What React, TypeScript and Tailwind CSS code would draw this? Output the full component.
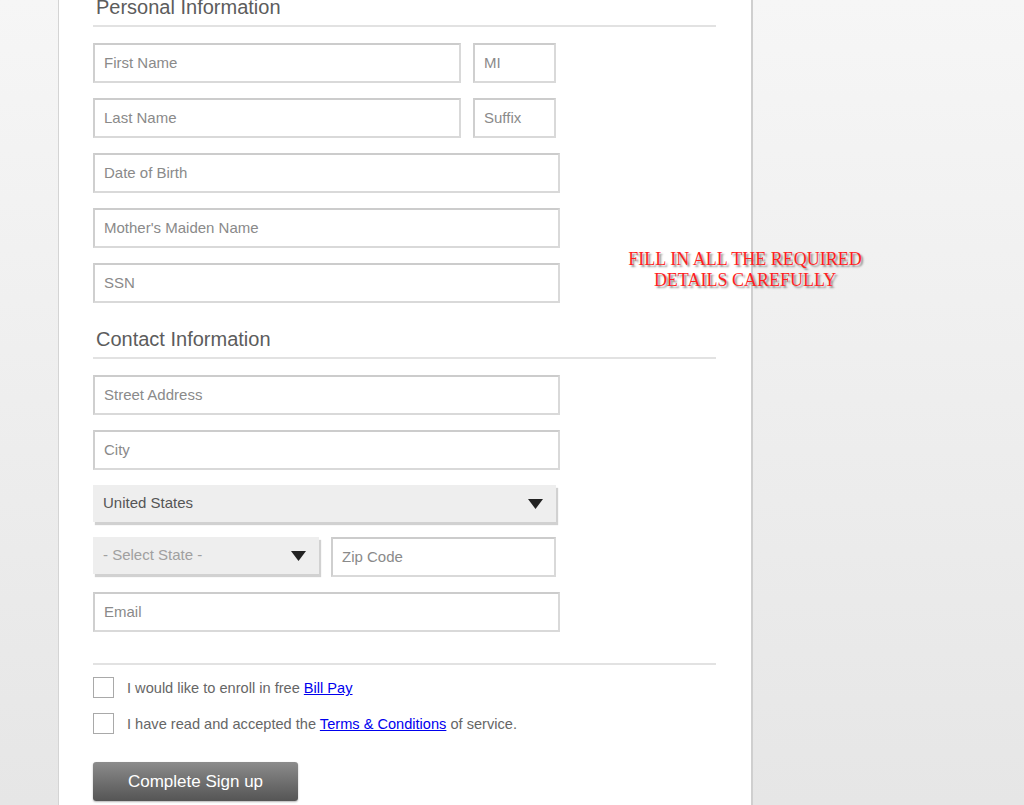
const font = { fontFamily: '"Liberation Sans", Arial, sans-serif' };

function Field({ placeholder, className = "" }: { placeholder: string; className?: string }) {
  return (
    <div
      className={`flex h-[40px] items-center border-2 border-[#d9d9d9] border-t-[#cccccc] border-l-[#cfcfcf] bg-white pl-[9px] text-[15px] text-[#8a8a8a] ${className}`}
    >
      {placeholder}
    </div>
  );
}

function Select({ label, muted, className = "" }: { label: string; muted?: boolean; className?: string }) {
  return (
    <div
      className={`flex h-[37px] items-center justify-between bg-[#eeeeee] pl-[10px] pr-[13px] text-[15px] shadow-[2px_3px_1px_rgba(0,0,0,0.18)] ${
        muted ? "text-[#a0a0a0]" : "text-[#555555]"
      } ${className}`}
    >
      <span>{label}</span>
      <svg width="15" height="10" viewBox="0 0 15 10">
        <path d="M0 0 H15 L7.5 10 Z" fill="#222" />
      </svg>
    </div>
  );
}

function Heading({ children, className = "" }: { children: string; className?: string }) {
  return (
    <div className={className}>
      <h2 className="pl-[3px] text-[20px] leading-[22px] text-[#5c5c5c]">{children}</h2>
      <div className="mt-[7px] h-[2px] bg-[#e2e2e2]" />
    </div>
  );
}

function Check({ children }: { children: React.ReactNode }) {
  return (
    <div className="flex h-[21px] items-center">
      <span className="h-[21px] w-[21px] shrink-0 border border-[#a9a9a9] bg-white" />
      <span className="ml-[13px] mt-[3px] text-[14.6px] text-[#666666]">{children}</span>
    </div>
  );
}

export default function App() {
  return (
    <div
      className="relative h-[805px] w-[1024px] overflow-hidden bg-linear-to-b from-[#f6f6f6] to-[#e6e6e6]"
      style={font}
    >
      <div className="ml-[58px] flow-root h-full w-[695px] border-l border-r-2 border-l-[#d4d4d4] border-r-[#cfcfcf] bg-white pl-[34px]">
        <div className="w-[623px]">
          <Heading className="-mt-[4px]">Personal Information</Heading>

          <div className="mt-[16px] flex gap-[12px]">
            <Field placeholder="First Name" className="w-[368px]" />
            <Field placeholder="MI" className="w-[83px]" />
          </div>
          <div className="mt-[15px] flex gap-[12px]">
            <Field placeholder="Last Name" className="w-[368px]" />
            <Field placeholder="Suffix" className="w-[83px]" />
          </div>
          <Field placeholder="Date of Birth" className="mt-[15px] w-[467px]" />
          <Field placeholder="Mother's Maiden Name" className="mt-[15px] w-[467px]" />
          <Field placeholder="SSN" className="mt-[15px] w-[467px]" />

          <Heading className="mt-[25px]">Contact Information</Heading>

          <Field placeholder="Street Address" className="mt-[16px] w-[467px]" />
          <Field placeholder="City" className="mt-[15px] w-[467px]" />
          <Select label="United States" className="mt-[15px] w-[463px]" />
          <div className="mt-[15px] flex items-start gap-[12px]">
            <Select label="- Select State -" muted className="w-[226px]" />
            <Field placeholder="Zip Code" className="w-[225px]" />
          </div>
          <Field placeholder="Email" className="mt-[15px] w-[467px]" />

          <div className="mt-[31px] h-[2px] bg-[#e2e2e2]" />

          <div className="mt-[12px] flex flex-col gap-[15px]">
            <Check>
              I would like to enroll in free{" "}
              <a href="#" className="text-[#0000ee] underline">
                Bill Pay
              </a>
            </Check>
            <Check>
              I have read and accepted the{" "}
              <a href="#" className="text-[#0000ee] underline">
                Terms &amp; Conditions
              </a>{" "}
              of service.
            </Check>
          </div>

          <button className="mt-[28px] h-[39px] w-[205px] rounded-[3px] bg-linear-to-b from-[#8c8c8c] to-[#555555] text-[17px] text-white shadow-[0_1px_2px_rgba(0,0,0,0.3)]">
            Complete Sign up
          </button>
        </div>
      </div>

      <div
        className="absolute left-[595px] top-[249px] w-[300px] text-center text-[18px] leading-[21px] text-[#ff1f1f] [text-shadow:2px_2px_2px_#8a8a8a]"
        style={{ fontFamily: '"Liberation Serif", "Times New Roman", serif' }}
      >
        FILL IN ALL THE REQUIRED
        <br />
        DETAILS CAREFULLY
      </div>
    </div>
  );
}
